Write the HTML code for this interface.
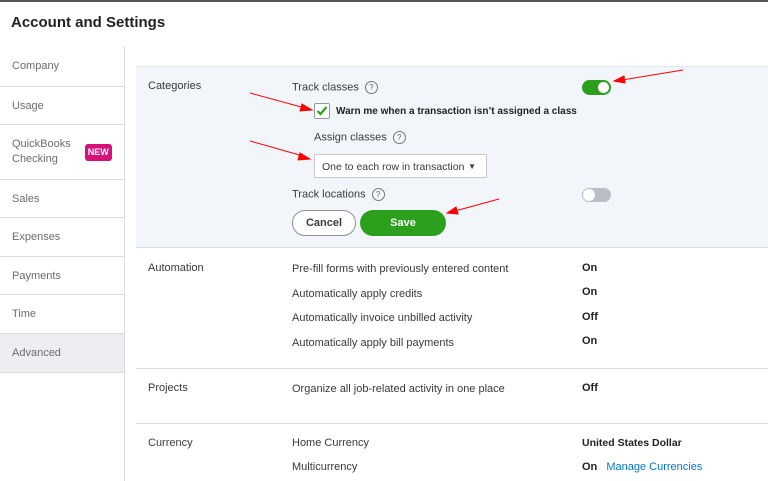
<!DOCTYPE html>
<html><head><style>
*{margin:0;padding:0;box-sizing:border-box}
body{width:768px;height:481px;overflow:hidden;background:#fff;font-family:"Liberation Sans",sans-serif;color:#393a3d;position:relative;font-size:11px}
.a{position:absolute;white-space:nowrap}
.topbar{left:0;top:0;width:768px;height:2px;background:#555}
h1{position:absolute;left:11px;top:14px;font-size:15px;font-weight:bold;color:#222}
.side{left:0;top:46px;width:125px;height:435px;border-right:1px solid #dcdcdc}
.it{position:absolute;left:0;width:124px;border-bottom:1px solid #dcdcdc;color:#6b6c72;font-size:11px;padding-left:12px;display:flex;align-items:center}
.blue{left:136px;top:66px;width:632px;height:182px;background:#f2f6fb;border-top:1px solid #e3e6ea;border-bottom:1px solid #dcdfe3}
.hr{left:136px;width:632px;height:1px;background:#dcdcdc}
.q{display:inline-block;width:13px;height:13px;border:1px solid #777;border-radius:50%;font-size:8px;text-align:center;line-height:11px;color:#666;margin-left:6px;vertical-align:middle}
.lbl{font-size:11px;color:#393a3d}
.b{font-weight:bold;color:#222}
</style></head><body>
<div class="a topbar"></div>
<h1>Account and Settings</h1>
<div class="a side">
<div class="it" style="top:0;height:41px">Company</div>
<div class="it" style="top:41px;height:38px">Usage</div>
<div class="it" style="top:79px;height:55px;line-height:15px"><span>QuickBooks<br>Checking</span><span style="margin-left:14px;background:#d4127a;color:#fff;font-weight:bold;font-size:9px;padding:1px 3px;border-radius:3px">NEW</span></div>
<div class="it" style="top:134px;height:38px">Sales</div>
<div class="it" style="top:172px;height:39px">Expenses</div>
<div class="it" style="top:211px;height:38px">Payments</div>
<div class="it" style="top:249px;height:39px">Time</div>
<div class="it" style="top:288px;height:39px;background:#eceef1">Advanced</div>
</div>
<div class="a blue"></div>
<div class="a lbl" style="left:148px;top:80px">Categories</div>
<div class="a lbl" style="left:292px;top:81px">Track classes<span class="q">?</span></div>
<div class="a" style="left:582px;top:80px;width:29px;height:15px;border-radius:8px;background:#2ca01c"><div style="position:absolute;right:2px;top:2px;width:11px;height:11px;border-radius:50%;background:#fff"></div></div>
<div class="a" style="left:314px;top:103px;width:16px;height:16px;border:1px solid #999;background:#fff;border-radius:2px"><svg width="14" height="14" viewBox="0 0 14 14"><path d="M2.5 7 L5.5 10 L11.5 3" stroke="#2ca01c" stroke-width="2.2" fill="none"/></svg></div>
<div class="a b" style="left:336px;top:106px;font-size:10px">Warn me when a transaction isn’t assigned a class</div>
<div class="a lbl" style="left:314px;top:131px">Assign classes<span class="q">?</span></div>
<div class="a" style="left:314px;top:154px;width:173px;height:24px;background:#fff;border:1px solid #c8c8c8;padding:6px 0 0 7px;font-size:10.5px">One to each row in transaction<span style="position:absolute;right:10px;top:7px;font-size:8px">▼</span></div>
<div class="a lbl" style="left:292px;top:188px">Track locations<span class="q">?</span></div>
<div class="a" style="left:582px;top:188px;width:29px;height:14px;border-radius:7px;background:#babec5"><div style="position:absolute;left:1px;top:1px;width:12px;height:12px;border-radius:50%;background:#fff"></div></div>
<div class="a" style="left:292px;top:210px;width:64px;height:26px;border:1px solid #8d9096;border-radius:13px;background:#fff;font-weight:bold;text-align:center;line-height:24px;color:#393a3d">Cancel</div>
<div class="a" style="left:360px;top:210px;width:86px;height:26px;border-radius:13px;background:#2ca01c;color:#fff;font-weight:bold;text-align:center;line-height:26px">Save</div>
<svg class="a" style="left:0;top:0" width="768" height="481">
<g stroke="#f00" stroke-width="1" fill="#f00">
<line x1="683" y1="70" x2="622" y2="80"/><polygon points="614,81 624,76 625,83"/>
<line x1="250" y1="93" x2="305" y2="108"/><polygon points="312,110 302,104 300,111"/>
<line x1="250" y1="141" x2="303" y2="156"/><polygon points="310,159 300,153 298,160"/>
<line x1="499" y1="199" x2="455" y2="211"/><polygon points="447,213 456,207 458,214"/>
</g></svg>
<div class="a lbl" style="left:148px;top:262px">Automation</div>
<div class="a lbl" style="left:292px;top:263px">Pre-fill forms with previously entered content</div>
<div class="a lbl" style="left:292px;top:288px">Automatically apply credits</div>
<div class="a lbl" style="left:292px;top:312px">Automatically invoice unbilled activity</div>
<div class="a lbl" style="left:292px;top:337px">Automatically apply bill payments</div>
<div class="a b" style="left:582px;top:262px">On</div>
<div class="a b" style="left:582px;top:286px">On</div>
<div class="a b" style="left:582px;top:311px">Off</div>
<div class="a b" style="left:582px;top:335px">On</div>
<div class="a hr" style="top:368px"></div>
<div class="a lbl" style="left:148px;top:382px">Projects</div>
<div class="a lbl" style="left:292px;top:383px">Organize all job-related activity in one place</div>
<div class="a b" style="left:582px;top:382px">Off</div>
<div class="a hr" style="top:423px"></div>
<div class="a lbl" style="left:148px;top:437px">Currency</div>
<div class="a lbl" style="left:292px;top:437px">Home Currency</div>
<div class="a lbl" style="left:292px;top:461px">Multicurrency</div>
<div class="a b" style="left:582px;top:437px;font-size:10.5px">United States Dollar</div>
<div class="a b" style="left:582px;top:461px">On <span style="font-weight:normal;color:#0077c5;margin-left:6px">Manage Currencies</span></div>
</body></html>
